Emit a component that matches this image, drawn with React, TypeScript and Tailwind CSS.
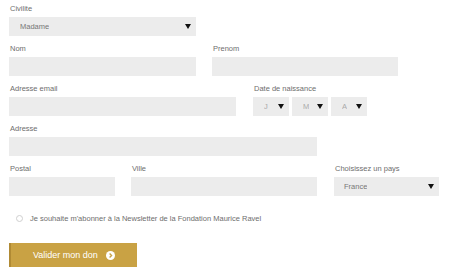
import React from "react";

function Arrow() {
  return (
    <svg width="6" height="5" viewBox="0 0 6 5" className="shrink-0">
      <path d="M0 0 H6 L3 5 Z" fill="#111" />
    </svg>
  );
}

function Label({ children }: { children: React.ReactNode }) {
  return <div className="h-[10px] leading-[10px] text-[7.5px] text-[#6e6e6e] pl-[1px] mb-[3px] whitespace-nowrap">{children}</div>;
}

function Input({ w }: { w: string }) {
  return <div className={`${w} h-[19px] bg-[#ececec]`} />;
}

function Select({ w, value, px = "pl-[11px] pr-[5px]", tone = "text-[#777]" }: { w: string; value: string; px?: string; tone?: string }) {
  return (
    <div className={`${w} h-[19px] bg-[#ececec] flex items-center justify-between ${px}`}>
      <span className={`text-[7.5px] ${tone} overflow-hidden whitespace-nowrap`}>{value}</span>
      <Arrow />
    </div>
  );
}

export default function App() {
  return (
    <div className="w-[474px] h-[274px] bg-white pl-[9px] pt-[4px]" style={{ fontFamily: '"Liberation Sans", Arial, sans-serif' }}>
      {/* civilite */}
      <div className="mb-[8px]">
        <Label>Civilite</Label>
        <Select w="w-[187px]" value="Madame" />
      </div>

      <div className="flex mb-[8px]">
        <div className="mr-[16px]">
          <Label>Nom</Label>
          <Input w="w-[187px]" />
        </div>
        <div>
          <Label>Prenom</Label>
          <Input w="w-[186px]" />
        </div>
      </div>

      <div className="flex mb-[8px]">
        <div className="mr-[17px]">
          <Label>Adresse email</Label>
          <Input w="w-[227px]" />
        </div>
        <div>
          <Label>Date de naissance</Label>
          <div className="flex gap-[3px]">
            <Select w="w-[36px]" value="J" tone="text-[#aaa]" />
            <Select w="w-[36px]" value="M" tone="text-[#aaa]" />
            <Select w="w-[36px]" value="A" tone="text-[#aaa]" />
          </div>
        </div>
      </div>

      <div className="mb-[8px]">
        <Label>Adresse</Label>
        <Input w="w-[308px]" />
      </div>

      <div className="flex">
        <div className="mr-[16px]">
          <Label>Postal</Label>
          <Input w="w-[106px]" />
        </div>
        <div className="mr-[17px]">
          <Label>Ville</Label>
          <Input w="w-[186px]" />
        </div>
        <div>
          <Label>Choisissez un pays</Label>
          <Select w="w-[105px]" value="France" px="pl-[10px] pr-[5px]" />
        </div>
      </div>

      <div className="flex items-center mt-[17px] pl-[7px]">
        <div className="w-[7px] h-[7px] rounded-full border border-[#cfcfcf] bg-white" />
        <span className="ml-[7px] text-[7.5px] text-[#6e6e6e] whitespace-nowrap">
          Je souhaite m'abonner à la Newsletter de la Fondation Maurice Ravel
        </span>
      </div>

      <button className="mt-[19px] w-[128px] h-[24px] bg-[#c9a244] border-l-[2px] border-[#b08a34] flex items-center pl-[22px] text-white text-[9px]">
        <span>Valider mon don</span>
        <svg width="9" height="9" viewBox="0 0 10 10" className="ml-[8px]">
          <circle cx="5" cy="5" r="5" fill="#fff" />
          <path d="M4 2.8 L6.2 5 L4 7.2" fill="none" stroke="#c9a244" strokeWidth="1.5" />
        </svg>
      </button>
    </div>
  );
}
